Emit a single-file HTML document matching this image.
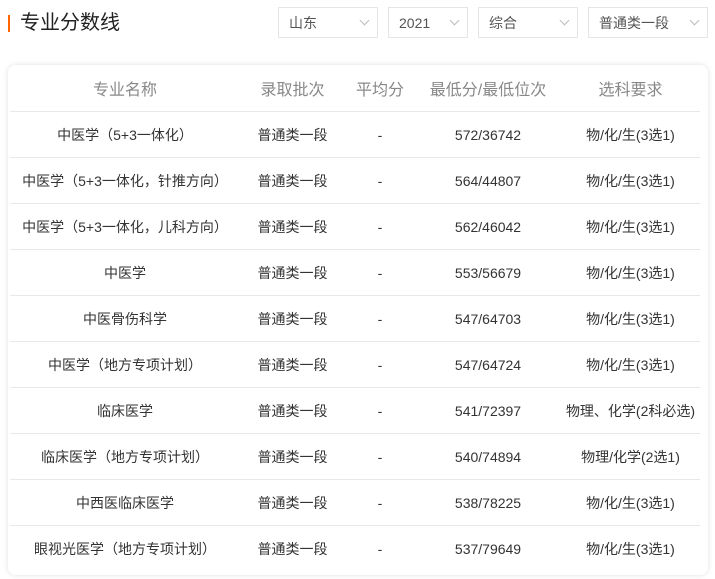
<!DOCTYPE html><html><head><meta charset="utf-8"><style>
body{margin:0;background:#fff;font-family:"Liberation Sans","Noto Sans CJK SC",sans-serif;width:715px;height:579px;overflow:hidden;position:relative}
.t{position:absolute;left:8px;top:8px;font-size:20px;color:#222;line-height:30px}
.t:before{content:"";position:absolute;left:0;top:7px;width:2px;height:17px;background:#f60}
.t span{margin-left:12px}
.s{position:absolute;top:7px;height:31px;border:1px solid #e5e5e5;box-sizing:border-box;font-size:14px;color:#555;line-height:30px;padding-left:10px}
.s i{position:absolute;right:9px;top:9px;width:6px;height:6px;border-right:1px solid #bbb;border-bottom:1px solid #bbb;transform:rotate(45deg)}
.c{position:absolute;left:8px;top:65px;width:700px;height:510px;border-radius:8px;box-shadow:0 0 6px rgba(0,0,0,.12);background:#fff;overflow:hidden}
table{border-collapse:collapse;width:690px;margin-left:2px;table-layout:fixed}
td,th{text-align:center;font-size:14px;color:#333;height:45px;padding:0;border-bottom:1px solid #e8e8e8;font-weight:normal;white-space:nowrap}
th{font-size:16px;color:#888;height:46px}
</style></head><body>
<div class="t"><span>专业分数线</span></div>
<div class="s" style="left:278px;width:100px">山东<i></i></div>
<div class="s" style="left:388px;width:80px">2021<i></i></div>
<div class="s" style="left:478px;width:100px">综合<i></i></div>
<div class="s" style="left:588px;width:120px">普通类一段<i></i></div>
<div class="c"><table>
<colgroup><col style="width:230px"><col style="width:105px"><col style="width:70px"><col style="width:146px"><col></colgroup>
<tr><th>专业名称</th><th>录取批次</th><th>平均分</th><th>最低分/最低位次</th><th>选科要求</th></tr>
<tr><td>中医学（5+3一体化）</td><td>普通类一段</td><td>-</td><td>572/36742</td><td>物/化/生(3选1)</td></tr>
<tr><td>中医学（5+3一体化，针推方向）</td><td>普通类一段</td><td>-</td><td>564/44807</td><td>物/化/生(3选1)</td></tr>
<tr><td>中医学（5+3一体化，儿科方向）</td><td>普通类一段</td><td>-</td><td>562/46042</td><td>物/化/生(3选1)</td></tr>
<tr><td>中医学</td><td>普通类一段</td><td>-</td><td>553/56679</td><td>物/化/生(3选1)</td></tr>
<tr><td>中医骨伤科学</td><td>普通类一段</td><td>-</td><td>547/64703</td><td>物/化/生(3选1)</td></tr>
<tr><td>中医学（地方专项计划）</td><td>普通类一段</td><td>-</td><td>547/64724</td><td>物/化/生(3选1)</td></tr>
<tr><td>临床医学</td><td>普通类一段</td><td>-</td><td>541/72397</td><td>物理、化学(2科必选)</td></tr>
<tr><td>临床医学（地方专项计划）</td><td>普通类一段</td><td>-</td><td>540/74894</td><td>物理/化学(2选1)</td></tr>
<tr><td>中西医临床医学</td><td>普通类一段</td><td>-</td><td>538/78225</td><td>物/化/生(3选1)</td></tr>
<tr><td style="border:0">眼视光医学（地方专项计划）</td><td style="border:0">普通类一段</td><td style="border:0">-</td><td style="border:0">537/79649</td><td style="border:0">物/化/生(3选1)</td></tr>
</table></div>
</body></html>
